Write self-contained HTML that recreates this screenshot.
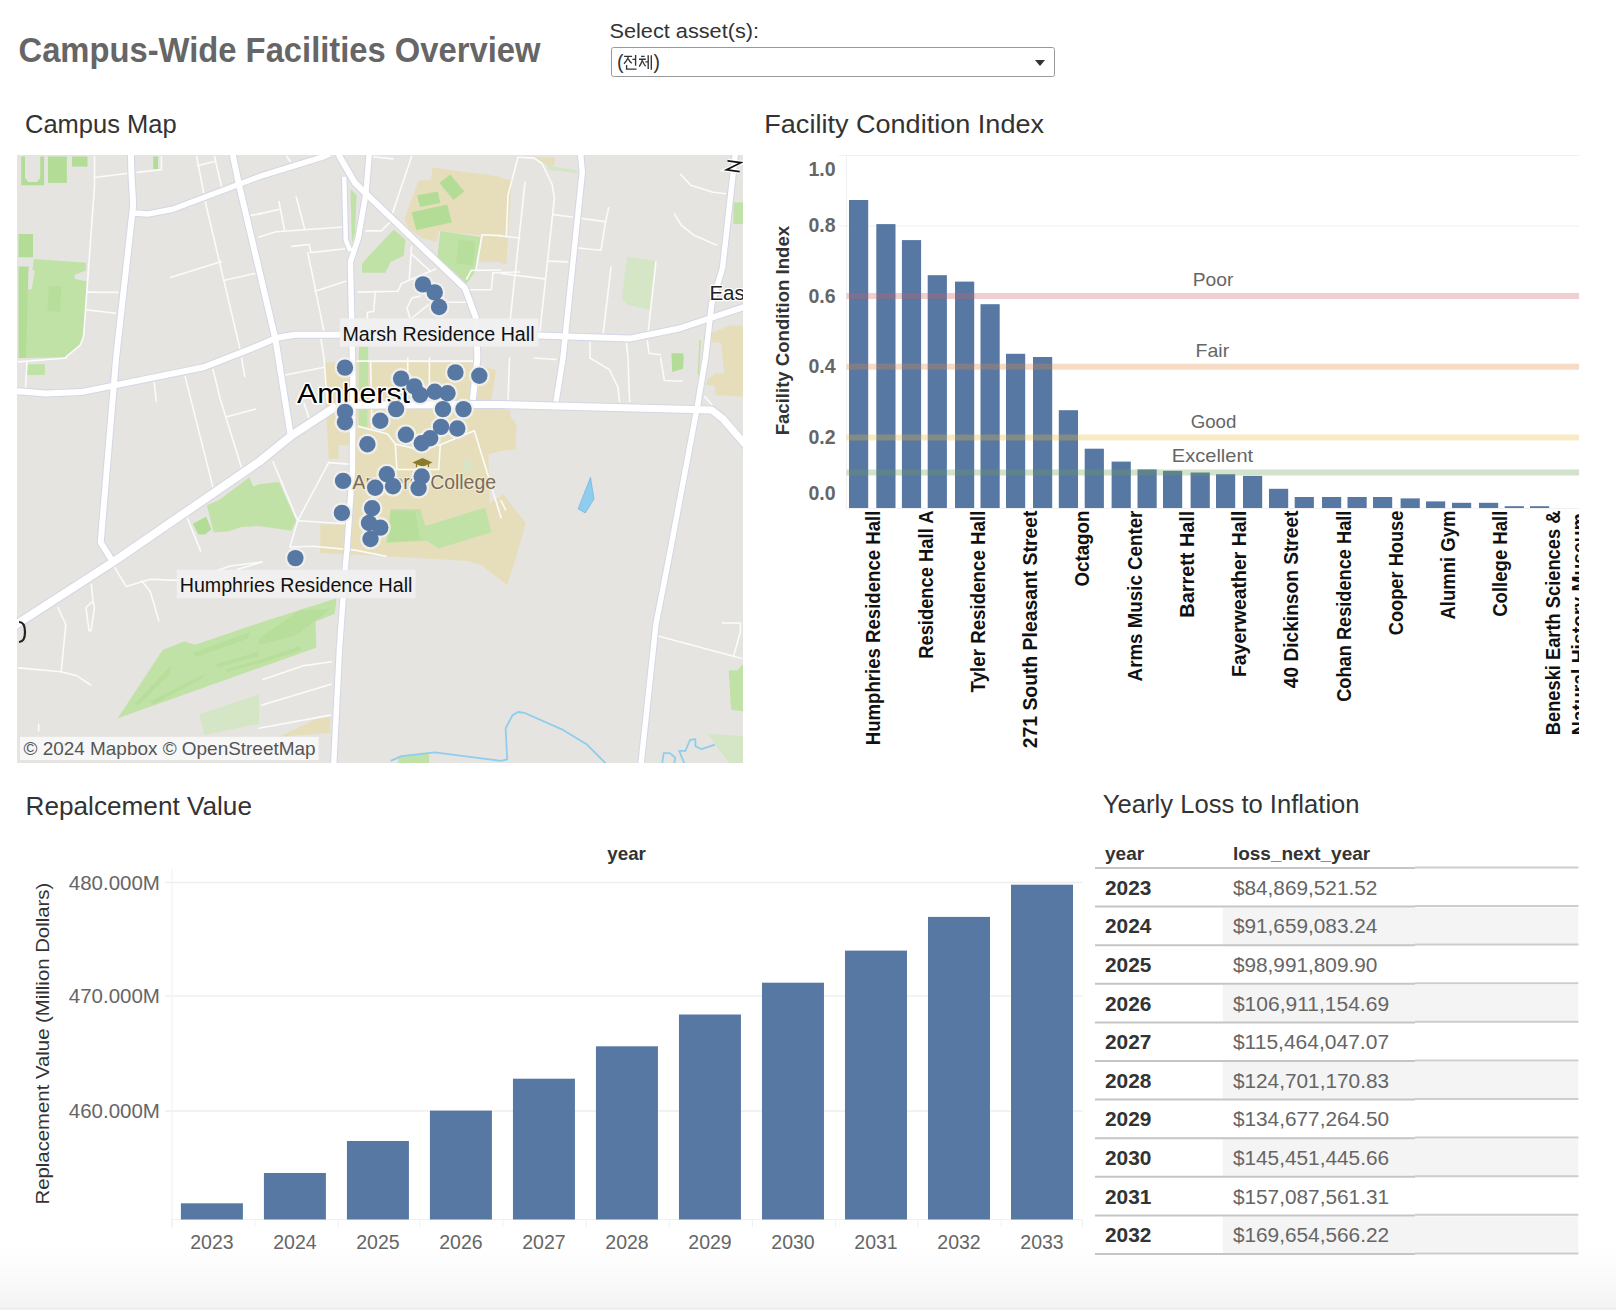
<!DOCTYPE html><html><head><meta charset="utf-8"><title>Campus-Wide Facilities Overview</title>
<style>html,body{margin:0;padding:0;background:#fff;width:1616px;height:1310px;overflow:hidden}
svg{display:block;font-family:"Liberation Sans",sans-serif}</style></head><body>
<svg width="1616" height="1310" viewBox="0 0 1616 1310">
<defs>
<linearGradient id="btm" x1="0" y1="0" x2="0" y2="1"><stop offset="0" stop-color="#fff"/><stop offset="0.35" stop-color="#fcfcfc"/><stop offset="1" stop-color="#f4f4f4"/></linearGradient>
<clipPath id="mapclip"><rect x="17" y="155" width="726" height="608"/></clipPath>
<clipPath id="fciclip"><rect x="760" y="140" width="819" height="640"/></clipPath>
</defs>
<rect x="0" y="1245" width="1616" height="62" fill="url(#btm)"/><rect x="0" y="1307" width="1616" height="3" fill="#efefef"/>

<text x="18.5" y="62" font-size="35" fill="#666" font-weight="bold" text-anchor="stroke="#fff" stroke-width="0.6"" textLength="522" lengthAdjust="spacingAndGlyphs" >Campus-Wide Facilities Overview</text>
<text x="609.5" y="38" font-size="20.5" fill="#333" textLength="149.5" lengthAdjust="spacingAndGlyphs" >Select asset(s):</text>
<rect x="611.5" y="47.5" width="443" height="29" rx="2" fill="#fff" stroke="#999" stroke-width="1"/>
<path d="M1035 60 L1045 60 L1040 66 Z" fill="#333"/>
<text x="617" y="68.6" font-size="19.5" fill="#333">(</text>
<text x="653.6" y="68.6" font-size="19.5" fill="#333">)</text>
<g fill="none" stroke="#333" stroke-width="1.35" stroke-linecap="butt">
<path d="M624.1 56.4 H632.1 M628.3 56.9 Q627 61 624 63.7 M628.3 58.7 Q629.5 61.5 631.8 63.3 M635.6 54.9 V65.8 M632.4 59.4 H635.6 M626.6 65.1 V69.1 H636.6"/>
<path d="M641.1 56.4 H644.6 M639 59.2 H645.8 M642.5 59.7 Q641.3 63.5 639.2 66.6 M642.8 61.4 Q643.8 64.5 645.6 66.3 M648.2 55.2 V69.1 M645.4 61.8 H648.2 M651.3 55.2 V69.8"/>
</g>
<text x="25" y="133.2" font-size="26.5" fill="#333" text-anchor="stroke="#fff" stroke-width="0.45"" textLength="151.6" lengthAdjust="spacingAndGlyphs" >Campus Map</text>
<text x="764.3" y="133" font-size="26.5" fill="#333" text-anchor="stroke="#fff" stroke-width="0.45"" textLength="279.7" lengthAdjust="spacingAndGlyphs" >Facility Condition Index</text>
<text x="25.5" y="814.7" font-size="26.5" fill="#333" text-anchor="stroke="#fff" stroke-width="0.45"" textLength="226.5" lengthAdjust="spacingAndGlyphs" >Repalcement Value</text>
<text x="1102.8" y="813.1" font-size="26.5" fill="#333" text-anchor="stroke="#fff" stroke-width="0.45"" textLength="256.8" lengthAdjust="spacingAndGlyphs" >Yearly Loss to Inflation</text>
<g stroke="#f0f0f0" stroke-width="1">
<line x1="839" y1="155.5" x2="1579" y2="155.5"/>
<line x1="839" y1="226" x2="1579" y2="226"/>
<line x1="846.5" y1="155" x2="846.5" y2="508"/>
<line x1="846.5" y1="508.5" x2="1579" y2="508.5"/>
</g>
<g fill="#5878a4">
<rect x="849.00" y="200" width="19.2" height="308.0"/>
<rect x="876.30" y="224.1" width="19.2" height="283.9"/>
<rect x="901.90" y="240.1" width="19.2" height="267.9"/>
<rect x="927.70" y="275.2" width="19.2" height="232.8"/>
<rect x="955.00" y="281.6" width="19.2" height="226.4"/>
<rect x="980.50" y="304.2" width="19.2" height="203.8"/>
<rect x="1006.00" y="353.8" width="19.2" height="154.2"/>
<rect x="1033.00" y="357" width="19.2" height="151.0"/>
<rect x="1058.80" y="410.2" width="19.2" height="97.8"/>
<rect x="1084.70" y="448.7" width="19.2" height="59.3"/>
<rect x="1111.60" y="461.6" width="19.2" height="46.4"/>
<rect x="1137.50" y="469.4" width="19.2" height="38.6"/>
<rect x="1163.00" y="470.8" width="19.2" height="37.2"/>
<rect x="1190.60" y="472.5" width="19.2" height="35.5"/>
<rect x="1216.00" y="474.2" width="19.2" height="33.8"/>
<rect x="1243.00" y="475.9" width="19.2" height="32.1"/>
<rect x="1269.00" y="488.8" width="19.2" height="19.2"/>
<rect x="1294.70" y="497" width="19.2" height="11.0"/>
<rect x="1322.00" y="497" width="19.2" height="11.0"/>
<rect x="1347.50" y="497" width="19.2" height="11.0"/>
<rect x="1373.00" y="497" width="19.2" height="11.0"/>
<rect x="1400.60" y="498.4" width="19.2" height="9.6"/>
<rect x="1426.00" y="501.4" width="19.2" height="6.6"/>
<rect x="1452.00" y="502.8" width="19.2" height="5.2"/>
<rect x="1479.00" y="502.8" width="19.2" height="5.2"/>
<rect x="1504.70" y="506.2" width="19.2" height="1.8"/>
<rect x="1530.00" y="506.2" width="19.2" height="1.8"/>
</g>
<rect x="846.5" y="293" width="732.5" height="6" fill="rgb(205,95,100)" fill-opacity="0.3"/>
<rect x="846.5" y="363.7" width="732.5" height="6" fill="rgb(225,140,70)" fill-opacity="0.3"/>
<rect x="846.5" y="434.5" width="732.5" height="6" fill="rgb(230,190,60)" fill-opacity="0.3"/>
<rect x="846.5" y="469.5" width="732.5" height="6" fill="rgb(110,160,90)" fill-opacity="0.3"/>
<text x="1192.7" y="286" font-size="19" fill="#666" textLength="40.7" lengthAdjust="spacingAndGlyphs" >Poor</text>
<text x="1195.6" y="357.4" font-size="19" fill="#666" textLength="33.6" lengthAdjust="spacingAndGlyphs" >Fair</text>
<text x="1190.7" y="427.9" font-size="19" fill="#666" textLength="45.7" lengthAdjust="spacingAndGlyphs" >Good</text>
<text x="1171.8" y="462.3" font-size="19" fill="#666" textLength="81.4" lengthAdjust="spacingAndGlyphs" >Excellent</text>
<text x="835.5" y="176" font-size="19.5" fill="#666" font-weight="bold" text-anchor="end" >1.0</text>
<text x="835.5" y="232" font-size="19.5" fill="#666" font-weight="bold" text-anchor="end" >0.8</text>
<text x="835.5" y="302.5" font-size="19.5" fill="#666" font-weight="bold" text-anchor="end" >0.6</text>
<text x="835.5" y="373" font-size="19.5" fill="#666" font-weight="bold" text-anchor="end" >0.4</text>
<text x="835.5" y="443.5" font-size="19.5" fill="#666" font-weight="bold" text-anchor="end" >0.2</text>
<text x="835.5" y="499.5" font-size="19.5" fill="#666" font-weight="bold" text-anchor="end" >0.0</text>
<text transform="translate(788.5,435.3) rotate(-90)" font-size="17.5" font-weight="bold" fill="#333" textLength="209.4" lengthAdjust="spacingAndGlyphs">Facility Condition Index</text>
<g clip-path="url(#fciclip)">
<text transform="translate(880.4,745.3) rotate(-90)" font-size="19.5" font-weight="bold" fill="#111" textLength="234.7" lengthAdjust="spacingAndGlyphs">Humphries Residence Hall</text>
<text transform="translate(932.6,658.8) rotate(-90)" font-size="19.5" font-weight="bold" fill="#111" textLength="148.2" lengthAdjust="spacingAndGlyphs">Residence Hall A</text>
<text transform="translate(984.9,692.4) rotate(-90)" font-size="19.5" font-weight="bold" fill="#111" textLength="181.8" lengthAdjust="spacingAndGlyphs">Tyler Residence Hall</text>
<text transform="translate(1037.1,748.2) rotate(-90)" font-size="19.5" font-weight="bold" fill="#111" textLength="237.6" lengthAdjust="spacingAndGlyphs">271 South Pleasant Street</text>
<text transform="translate(1089.4,586.6) rotate(-90)" font-size="19.5" font-weight="bold" fill="#111" textLength="76.0" lengthAdjust="spacingAndGlyphs">Octagon</text>
<text transform="translate(1141.6,681.4) rotate(-90)" font-size="19.5" font-weight="bold" fill="#111" textLength="170.8" lengthAdjust="spacingAndGlyphs">Arms Music Center</text>
<text transform="translate(1193.8,617.7) rotate(-90)" font-size="19.5" font-weight="bold" fill="#111" textLength="107.1" lengthAdjust="spacingAndGlyphs">Barrett Hall</text>
<text transform="translate(1246.1,677.1) rotate(-90)" font-size="19.5" font-weight="bold" fill="#111" textLength="166.5" lengthAdjust="spacingAndGlyphs">Fayerweather Hall</text>
<text transform="translate(1298.3,688.2) rotate(-90)" font-size="19.5" font-weight="bold" fill="#111" textLength="177.6" lengthAdjust="spacingAndGlyphs">40 Dickinson Street</text>
<text transform="translate(1350.6,701.8) rotate(-90)" font-size="19.5" font-weight="bold" fill="#111" textLength="191.2" lengthAdjust="spacingAndGlyphs">Cohan Residence Hall</text>
<text transform="translate(1402.8,635.3) rotate(-90)" font-size="19.5" font-weight="bold" fill="#111" textLength="124.7" lengthAdjust="spacingAndGlyphs">Cooper House</text>
<text transform="translate(1455.0,619.5) rotate(-90)" font-size="19.5" font-weight="bold" fill="#111" textLength="108.9" lengthAdjust="spacingAndGlyphs">Alumni Gym</text>
<text transform="translate(1507.3,616.8) rotate(-90)" font-size="19.5" font-weight="bold" fill="#111" textLength="106.2" lengthAdjust="spacingAndGlyphs">College Hall</text>
<text transform="translate(1559.5,735.2) rotate(-90)" font-size="19.5" font-weight="bold" fill="#111" textLength="224.6" lengthAdjust="spacingAndGlyphs">Beneski Earth Sciences &amp;</text>
<text transform="translate(1586.0,735.2) rotate(-90)" font-size="19.5" font-weight="bold" fill="#111" textLength="222" lengthAdjust="spacingAndGlyphs">Natural History Museum</text>
</g>
<g stroke="#eeeeee" stroke-width="1.3">
<line x1="165" y1="882.5" x2="1082.5" y2="882.5"/>
<line x1="165" y1="995.8" x2="1082.5" y2="995.8"/>
<line x1="165" y1="1111" x2="1082.5" y2="1111"/>
</g>
<g stroke="#f0f0f0" stroke-width="1">
<line x1="172" y1="869" x2="172" y2="1228"/>
<line x1="172" y1="1219.5" x2="1082.5" y2="1219.5"/>
<line x1="172" y1="1219.5" x2="172" y2="1227"/>
<line x1="255" y1="1219.5" x2="255" y2="1227"/>
<line x1="338" y1="1219.5" x2="338" y2="1227"/>
<line x1="419.7" y1="1219.5" x2="419.7" y2="1227"/>
<line x1="503" y1="1219.5" x2="503" y2="1227"/>
<line x1="586" y1="1219.5" x2="586" y2="1227"/>
<line x1="669.4" y1="1219.5" x2="669.4" y2="1227"/>
<line x1="752.5" y1="1219.5" x2="752.5" y2="1227"/>
<line x1="835.5" y1="1219.5" x2="835.5" y2="1227"/>
<line x1="917.9" y1="1219.5" x2="917.9" y2="1227"/>
<line x1="1001" y1="1219.5" x2="1001" y2="1227"/>
<line x1="1082.5" y1="1219.5" x2="1082.5" y2="1227"/>
</g>
<g fill="#5878a4">
<rect x="180.90" y="1203.3" width="62" height="16.2"/>
<rect x="263.91" y="1173" width="62" height="46.5"/>
<rect x="346.92" y="1141" width="62" height="78.5"/>
<rect x="429.93" y="1110.6" width="62" height="108.9"/>
<rect x="512.94" y="1078.7" width="62" height="140.8"/>
<rect x="595.95" y="1046.3" width="62" height="173.2"/>
<rect x="678.96" y="1014.5" width="62" height="205.0"/>
<rect x="761.97" y="982.7" width="62" height="236.8"/>
<rect x="844.98" y="950.6" width="62" height="268.9"/>
<rect x="927.99" y="916.9" width="62" height="302.6"/>
<rect x="1011.00" y="884.7" width="62" height="334.8"/>
</g>
<text x="211.9" y="1248.6" font-size="19.5" fill="#666" text-anchor="middle" >2023</text>
<text x="294.9" y="1248.6" font-size="19.5" fill="#666" text-anchor="middle" >2024</text>
<text x="377.9" y="1248.6" font-size="19.5" fill="#666" text-anchor="middle" >2025</text>
<text x="460.9" y="1248.6" font-size="19.5" fill="#666" text-anchor="middle" >2026</text>
<text x="543.9" y="1248.6" font-size="19.5" fill="#666" text-anchor="middle" >2027</text>
<text x="627.0" y="1248.6" font-size="19.5" fill="#666" text-anchor="middle" >2028</text>
<text x="710.0" y="1248.6" font-size="19.5" fill="#666" text-anchor="middle" >2029</text>
<text x="793.0" y="1248.6" font-size="19.5" fill="#666" text-anchor="middle" >2030</text>
<text x="876.0" y="1248.6" font-size="19.5" fill="#666" text-anchor="middle" >2031</text>
<text x="959.0" y="1248.6" font-size="19.5" fill="#666" text-anchor="middle" >2032</text>
<text x="1042.0" y="1248.6" font-size="19.5" fill="#666" text-anchor="middle" >2033</text>
<text x="159.9" y="890" font-size="19.5" fill="#666" text-anchor="end" textLength="91.1" lengthAdjust="spacingAndGlyphs" >480.000M</text>
<text x="159.9" y="1002.6" font-size="19.5" fill="#666" text-anchor="end" textLength="91.1" lengthAdjust="spacingAndGlyphs" >470.000M</text>
<text x="159.9" y="1118" font-size="19.5" fill="#666" text-anchor="end" textLength="91.1" lengthAdjust="spacingAndGlyphs" >460.000M</text>
<text transform="translate(48.8,1204.5) rotate(-90)" font-size="19" fill="#333" textLength="321.7" lengthAdjust="spacingAndGlyphs">Replacement Value (Million Dollars)</text>
<text x="626.6" y="860" font-size="19" fill="#333" font-weight="bold" text-anchor="middle" textLength="38.6" lengthAdjust="spacingAndGlyphs" >year</text>
<rect x="1222.8" y="907.6" width="355.6" height="37.6" fill="#f4f4f4"/>
<rect x="1222.8" y="984.8" width="355.6" height="37.6" fill="#f4f4f4"/>
<rect x="1222.8" y="1062.0" width="355.6" height="37.6" fill="#f4f4f4"/>
<rect x="1222.8" y="1139.2" width="355.6" height="37.6" fill="#f4f4f4"/>
<rect x="1222.8" y="1216.4" width="355.6" height="37.6" fill="#f4f4f4"/>
<g stroke-width="2">
<line x1="1095" y1="868.0" x2="1415" y2="868.0" stroke="#c5c5c5"/><line x1="1415" y1="867.4" x2="1578.4" y2="867.4" stroke="#cdcdcd"/>
<line x1="1095" y1="906.6" x2="1415" y2="906.6" stroke="#c5c5c5"/><line x1="1415" y1="906.0" x2="1578.4" y2="906.0" stroke="#cdcdcd"/>
<line x1="1095" y1="945.2" x2="1415" y2="945.2" stroke="#c5c5c5"/><line x1="1415" y1="944.6" x2="1578.4" y2="944.6" stroke="#cdcdcd"/>
<line x1="1095" y1="983.8" x2="1415" y2="983.8" stroke="#c5c5c5"/><line x1="1415" y1="983.2" x2="1578.4" y2="983.2" stroke="#cdcdcd"/>
<line x1="1095" y1="1022.4" x2="1415" y2="1022.4" stroke="#c5c5c5"/><line x1="1415" y1="1021.8" x2="1578.4" y2="1021.8" stroke="#cdcdcd"/>
<line x1="1095" y1="1061.0" x2="1415" y2="1061.0" stroke="#c5c5c5"/><line x1="1415" y1="1060.4" x2="1578.4" y2="1060.4" stroke="#cdcdcd"/>
<line x1="1095" y1="1099.6" x2="1415" y2="1099.6" stroke="#c5c5c5"/><line x1="1415" y1="1099.0" x2="1578.4" y2="1099.0" stroke="#cdcdcd"/>
<line x1="1095" y1="1138.2" x2="1415" y2="1138.2" stroke="#c5c5c5"/><line x1="1415" y1="1137.6" x2="1578.4" y2="1137.6" stroke="#cdcdcd"/>
<line x1="1095" y1="1176.8" x2="1415" y2="1176.8" stroke="#c5c5c5"/><line x1="1415" y1="1176.2" x2="1578.4" y2="1176.2" stroke="#cdcdcd"/>
<line x1="1095" y1="1215.4" x2="1415" y2="1215.4" stroke="#c5c5c5"/><line x1="1415" y1="1214.8" x2="1578.4" y2="1214.8" stroke="#cdcdcd"/>
<line x1="1095" y1="1254.0" x2="1415" y2="1254.0" stroke="#c5c5c5"/><line x1="1415" y1="1253.4" x2="1578.4" y2="1253.4" stroke="#cdcdcd"/>
</g>
<text x="1105" y="860" font-size="19" fill="#333" font-weight="bold" >year</text>
<text x="1232.9" y="860" font-size="19" fill="#333" font-weight="bold" >loss_next_year</text>
<text x="1105" y="894.7" font-size="19.5" fill="#333" font-weight="bold" textLength="46.5" lengthAdjust="spacingAndGlyphs" >2023</text>
<text x="1232.9" y="894.7" font-size="19.5" fill="#666" textLength="144.5" lengthAdjust="spacingAndGlyphs" >$84,869,521.52</text>
<text x="1105" y="933.3" font-size="19.5" fill="#333" font-weight="bold" textLength="46.5" lengthAdjust="spacingAndGlyphs" >2024</text>
<text x="1232.9" y="933.3" font-size="19.5" fill="#666" textLength="144.5" lengthAdjust="spacingAndGlyphs" >$91,659,083.24</text>
<text x="1105" y="971.9" font-size="19.5" fill="#333" font-weight="bold" textLength="46.5" lengthAdjust="spacingAndGlyphs" >2025</text>
<text x="1232.9" y="971.9" font-size="19.5" fill="#666" textLength="144.5" lengthAdjust="spacingAndGlyphs" >$98,991,809.90</text>
<text x="1105" y="1010.5" font-size="19.5" fill="#333" font-weight="bold" textLength="46.5" lengthAdjust="spacingAndGlyphs" >2026</text>
<text x="1232.9" y="1010.5" font-size="19.5" fill="#666" textLength="156.2" lengthAdjust="spacingAndGlyphs" >$106,911,154.69</text>
<text x="1105" y="1049.1" font-size="19.5" fill="#333" font-weight="bold" textLength="46.5" lengthAdjust="spacingAndGlyphs" >2027</text>
<text x="1232.9" y="1049.1" font-size="19.5" fill="#666" textLength="156.2" lengthAdjust="spacingAndGlyphs" >$115,464,047.07</text>
<text x="1105" y="1087.7" font-size="19.5" fill="#333" font-weight="bold" textLength="46.5" lengthAdjust="spacingAndGlyphs" >2028</text>
<text x="1232.9" y="1087.7" font-size="19.5" fill="#666" textLength="156.2" lengthAdjust="spacingAndGlyphs" >$124,701,170.83</text>
<text x="1105" y="1126.3" font-size="19.5" fill="#333" font-weight="bold" textLength="46.5" lengthAdjust="spacingAndGlyphs" >2029</text>
<text x="1232.9" y="1126.3" font-size="19.5" fill="#666" textLength="156.2" lengthAdjust="spacingAndGlyphs" >$134,677,264.50</text>
<text x="1105" y="1164.9" font-size="19.5" fill="#333" font-weight="bold" textLength="46.5" lengthAdjust="spacingAndGlyphs" >2030</text>
<text x="1232.9" y="1164.9" font-size="19.5" fill="#666" textLength="156.2" lengthAdjust="spacingAndGlyphs" >$145,451,445.66</text>
<text x="1105" y="1203.5" font-size="19.5" fill="#333" font-weight="bold" textLength="46.5" lengthAdjust="spacingAndGlyphs" >2031</text>
<text x="1232.9" y="1203.5" font-size="19.5" fill="#666" textLength="156.2" lengthAdjust="spacingAndGlyphs" >$157,087,561.31</text>
<text x="1105" y="1242.1" font-size="19.5" fill="#333" font-weight="bold" textLength="46.5" lengthAdjust="spacingAndGlyphs" >2032</text>
<text x="1232.9" y="1242.1" font-size="19.5" fill="#666" textLength="156.2" lengthAdjust="spacingAndGlyphs" >$169,654,566.22</text>
<g clip-path="url(#mapclip)">
<rect x="17" y="155" width="726" height="608" fill="#e6e4e0"/>
<polygon points="432.5,167.4 501.0,176.7 501.0,262.0 479.0,261.9 482.0,235.6 438.7,230.9 437.2,241.8 423.2,238.7 407.7,227.8 404.6,218.5 418.6,180.6 431.0,179.8" fill="#e6deba"/>
<polygon points="534.3,157.3 554.4,157.3 554.4,165.8 547.5,165.8" fill="#e6deba"/>
<polygon points="501.0,178.2 511.8,179.8 506.4,263.4 501.0,263.4" fill="#e6deba"/>
<polygon points="324.4,362.6 472.8,362.6 496.0,370.4 491.4,399.8 474.3,405.0 501.0,409.1 510.3,410.7 510.3,416.1 516.5,424.6 515.7,449.4 501.0,451.0 488.3,454.0 489.8,503.6 503.3,494.3 525.8,523.0 515.0,561.0 507.2,585.0 482.1,565.6 468.1,561.0 386.0,556.3 320.2,553.0 320.2,524.4 349.0,524.4 352.0,470.0 348.9,445.3 338.5,445.3 338.5,459.0 328.7,459.0 325.6,406.0" fill="#e6deba"/>
<polygon points="711.7,333.2 729.5,325.4 743.0,325.4 743.0,358.0 743.0,396.7 715.6,395.2 714.8,385.9 706.3,385.1 707.0,379.7 715.6,373.5 724.1,372.7 721.0,342.5 711.7,342.5" fill="#e6deba"/>
<polygon points="316.3,719.0 330.3,716.7 330.3,733.0 279.1,736.8" fill="#e6deba"/>
<polygon points="21.2,156.5 25.0,156.5 25.0,178.0 28.0,182.0 37.0,182.0 40.2,178.0 40.2,156.5 44.1,156.5 44.1,185.2 21.2,185.2" fill="#b3dc97"/>
<polygon points="48.0,156.5 66.9,156.5 66.9,182.9 48.0,182.9" fill="#b3dc97"/>
<polygon points="72.0,156.5 87.5,156.5 87.5,166.6 72.0,166.6" fill="#b3dc97"/>
<polygon points="153.3,156.5 158.0,156.5 158.0,169.0 153.3,169.0" fill="#b3dc97"/>
<polygon points="18.5,234.0 33.0,234.0 33.0,257.2 18.5,257.2" fill="#b3dc97"/>
<polygon points="34.0,259.1 86.0,262.7 86.0,270.4 74.3,275.1 75.1,279.0 86.7,281.3 83.6,336.3 80.5,344.8 65.8,357.2 24.7,358.0 27.8,289.8 31.7,289.0 34.8,270.4 32.5,269.6" fill="#c1e2a6"/>
<polygon points="18.5,266.5 28.6,266.5 26.0,358.0 18.5,358.0" fill="#b3dc97"/>
<polygon points="27.0,364.2 44.9,364.2 44.9,375.0 27.0,375.0" fill="#c1e2a6"/>
<polygon points="350.4,189.0 356.6,195.3 355.0,232.5 352.0,243.3" fill="#c1e2a6"/>
<polygon points="393.8,229.4 405.4,239.4 403.8,255.7 390.7,261.9 385.3,272.7 362.0,272.7 362.0,263.4" fill="#c1e2a6"/>
<polygon points="439.5,182.9 450.3,174.4 464.3,191.4 453.4,199.9" fill="#b3dc97"/>
<polygon points="417.0,195.3 437.9,191.4 440.2,203.0 420.1,206.9" fill="#b3dc97"/>
<polygon points="411.6,212.3 447.2,204.6 451.9,222.4 416.2,230.1" fill="#b3dc97"/>
<polygon points="440.3,230.9 480.5,237.1 476.7,269.6 466.6,283.6 455.0,272.7 437.2,258.8" fill="#c1e2a6"/>
<polygon points="547.5,165.8 577.7,170.5 577.7,173.5 547.5,169.5" fill="#d4e6c6"/>
<polygon points="627.3,256.5 655.9,261.1 649.7,309.9 626.5,304.5 621.8,297.5" fill="#d4e6c6"/>
<polygon points="733.4,202.3 743.0,202.3 743.0,224.0 733.4,224.0" fill="#c1e2a6"/>
<polygon points="671.4,353.3 683.0,353.3 683.8,358.0 683.0,368.8 672.2,372.0" fill="#b3dc97"/>
<polygon points="358.9,346.0 368.2,346.0 368.2,358.0 367.4,427.7 358.9,426.2" fill="#c1e2a6"/>
<polygon points="390.7,509.0 420.1,509.0 425.5,526.1 485.2,507.5 491.4,532.3 438.7,548.6 426.3,540.8 386.0,543.1" fill="#c1e2a6"/>
<polygon points="206.8,505.2 218.4,500.5 249.4,477.3 253.3,486.6 259.0,484.3 279.1,482.0 296.2,520.7 291.5,530.7 259.0,526.1 241.6,526.9 227.7,531.5 213.7,532.3" fill="#c1e2a6"/>
<polygon points="192.8,523.8 206.0,516.8 211.4,529.2 205.2,534.6 198.3,534.6" fill="#b3dc97"/>
<polygon points="462.0,460.0 468.0,458.7 472.8,470.0 466.0,472.6" fill="#d4e6c6"/>
<polygon points="117.7,718.2 162.6,650.1 184.3,641.6 195.2,644.7 259.0,623.0 336.5,598.2 334.9,613.7 315.5,621.4 316.3,647.8 259.0,667.9" fill="#c1e2a6"/>
<polygon points="199.0,714.4 259.0,694.2 259.0,723.7 204.5,735.3" fill="#d4e6c6"/>
<polygon points="728.7,670.2 738.0,670.2 741.9,664.8 743.0,664.8 743.0,711.3 731.1,709.7" fill="#c1e2a6"/>
<polygon points="707.8,733.7 743.0,736.1 743.0,763.0 728.7,763.0" fill="#d4e6c6"/>
<polygon points="398.4,756.2 429.0,753.0 429.0,763.0 398.4,763.0" fill="#c1e2a6"/>
<polygon points="699.3,340.0 701.0,340.0 699.0,375.0 697.5,375.0" fill="#c1e2a6"/>
<polygon points="134.7,703.5 171.9,664.8 168.8,675.6 137.8,705.8" fill="#b3dc97" opacity="0.75"/>
<polygon points="150.2,701.2 205.2,674.1 201.4,678.7 153.3,704.3" fill="#b3dc97" opacity="0.75"/>
<polygon points="192.8,653.2 249.4,632.3 247.8,638.5 196.0,657.0" fill="#b3dc97" opacity="0.75"/>
<polygon points="216.0,664.0 259.0,651.6 259.0,656.0 218.0,667.5" fill="#b3dc97" opacity="0.75"/>
<polygon points="225.4,669.4 259.0,660.0 259.0,663.0 227.0,672.0" fill="#b3dc97" opacity="0.75"/>
<polygon points="259.0,638.5 299.3,610.6 330.3,609.0 296.2,635.4 259.0,645.0" fill="#b3dc97" opacity="0.75"/>
<polygon points="259.0,660.1 300.0,646.2 300.8,650.1 259.0,664.0" fill="#b3dc97" opacity="0.75"/>
<polygon points="48.8,285.9 61.2,285.9 60.5,312.2 47.5,311.0" fill="#b3dc97" opacity="0.75"/>
<polygon points="458.8,239.4 475.1,242.0 473.0,265.8 456.0,263.0" fill="#b3dc97" opacity="0.75"/>
<polygon points="390.7,511.0 415.0,511.0 420.0,540.0 388.0,542.0" fill="#b3dc97" opacity="0.75"/>
<g fill="none" stroke="#fbfbfb" stroke-width="1.6" stroke-linejoin="round" stroke-linecap="round">
<polyline points="94.5,156.5 94.5,186.0 83.6,336.3 80.5,344.8 65.8,357.2"/>
<polyline points="94.5,177.5 128.2,173.3"/>
<polyline points="137.0,172.4 161.4,169.7 161.4,156.5"/>
<polyline points="87.5,292.1 117.7,292.4"/>
<polyline points="86.7,309.9 115.8,313.3"/>
<polyline points="196.7,156.5 203.7,193.0"/>
<polyline points="197.5,165.8 214.5,161.5"/>
<polyline points="214.5,156.5 221.5,186.8"/>
<polyline points="205.2,201.5 240.1,349.4"/>
<polyline points="170.4,277.4 221.5,261.6"/>
<polyline points="224.6,280.2 254.8,273.5"/>
<polyline points="250.9,215.4 262.0,213.5"/>
<polyline points="259.0,213.9 279.9,209.2"/>
<polyline points="279.0,201.5 284.6,230.9"/>
<polyline points="296.2,196.8 304.7,229.4"/>
<polyline points="259.0,237.1 276.0,231.7 343.4,227.0"/>
<polyline points="291.5,246.4 309.3,244.5 310.9,252.6 345.0,248.7"/>
<polyline points="307.8,252.6 324.0,331.6"/>
<polyline points="314.8,291.3 345.8,281.3"/>
<polyline points="321.0,339.4 324.0,358.0 327.2,403.0"/>
<polyline points="365.9,230.9 381.4,230.9 392.2,220.0"/>
<polyline points="392.2,213.9 411.6,156.5"/>
<polyline points="286.9,156.5 290.0,161.2"/>
<polyline points="370.5,156.5 393.0,158.9"/>
<polyline points="358.1,292.1 397.7,291.3 401.5,283.6 435.6,268.9"/>
<polyline points="411.6,246.4 409.3,278.9"/>
<polyline points="411.6,254.1 429.4,270.4"/>
<polyline points="375.2,292.9 373.6,311.5 367.4,312.2 367.4,318.0"/>
<polyline points="448.0,302.2 466.6,302.2"/>
<polyline points="469.7,289.8 491.4,289.8 492.9,272.7 520.0,272.0"/>
<polyline points="466.6,279.0 471.2,270.4 501.0,270.0"/>
<polyline points="475.9,269.6 482.1,234.8 501.0,235.6"/>
<polyline points="410.0,318.0 407.0,308.0 412.0,298.0 420.0,296.0"/>
<polyline points="412.0,318.0 428.0,305.0"/>
<polyline points="518.0,157.3 534.3,158.1 542.0,163.5 552.1,184.4 554.4,198.4 539.7,333.2"/>
<polyline points="518.0,157.3 508.0,195.3 506.4,235.6"/>
<polyline points="501.0,236.0 520.0,238.0"/>
<polyline points="525.0,182.1 510.3,319.2"/>
<polyline points="552.9,214.6 572.3,217.0"/>
<polyline points="581.6,218.5 605.6,221.6 608.7,207.7"/>
<polyline points="605.6,221.6 600.9,250.3 578.5,248.0"/>
<polyline points="548.3,261.1 567.6,261.9"/>
<polyline points="501.0,273.5 545.2,278.9"/>
<polyline points="611.0,267.3 603.2,333.2"/>
<polyline points="655.9,261.9 648.2,331.6"/>
<polyline points="680.7,174.4 690.8,185.2 713.2,192.2 725.6,193.7"/>
<polyline points="674.5,213.9 681.5,225.5 694.6,235.6 716.3,244.9"/>
<polyline points="590.0,342.5 590.0,358.0"/>
<polyline points="626.5,343.2 628.0,358.0 629.6,401.4"/>
<polyline points="647.4,340.9 649.0,353.3 660.6,354.8"/>
<polyline points="509.5,358.0 508.0,399.1"/>
<polyline points="534.3,358.0 556.0,359.5"/>
<polyline points="590.0,358.0 609.4,369.6 618.0,387.4 619.5,401.4"/>
<polyline points="660.6,358.0 664.4,380.5 682.3,381.2"/>
<polyline points="704.7,396.7 711.7,404.5"/>
<polyline points="501.0,500.5 505.6,509.8"/>
<polyline points="27.0,362.6 25.5,387.4"/>
<polyline points="18.5,361.9 66.6,358.0"/>
<polyline points="154.1,382.0 156.4,401.4"/>
<polyline points="185.1,376.6 213.0,487.4"/>
<polyline points="213.0,369.6 220.0,398.3 241.6,468.0"/>
<polyline points="226.1,416.9 255.6,409.1"/>
<polyline points="241.6,358.0 244.7,376.6"/>
<polyline points="187.4,518.3 200.6,550.9"/>
<polyline points="285.3,375.0 324.0,367.3"/>
<polyline points="304.0,403.0 310.0,421.5"/>
<polyline points="356.6,361.1 472.8,361.1"/>
<polyline points="370.5,361.1 372.0,427.7"/>
<polyline points="407.7,358.0 407.7,378.1"/>
<polyline points="429.4,358.0 429.4,387.0"/>
<polyline points="358.1,426.2 387.6,433.9 395.3,444.0 415.5,448.6 440.3,444.8 474.3,430.8"/>
<polyline points="395.3,444.0 396.9,469.5 438.7,469.5 440.3,444.8"/>
<polyline points="328.7,462.6 348.9,464.1"/>
<polyline points="328.7,462.6 297.7,520.7 290.0,547.0"/>
<polyline points="273.0,461.8 297.7,520.7"/>
<polyline points="297.7,520.7 345.8,523.8"/>
<polyline points="290.0,547.0 313.2,546.2 355.0,550.1 386.0,556.3"/>
<polyline points="474.3,430.8 501.0,517.6"/>
<polyline points="386.0,400.0 396.0,412.0"/>
<polyline points="114.6,567.2 126.2,586.6 150.2,579.3 176.6,580.4"/>
<polyline points="237.0,569.5 262.0,562.0"/>
<polyline points="141.7,581.1 150.2,591.2 158.8,620.6"/>
<polyline points="91.4,584.2 92.9,601.3 85.9,607.5 89.0,630.7 91.0,630.7 94.5,607.5 92.9,601.3"/>
<polyline points="58.0,607.5 65.8,624.5 61.2,671.8"/>
<polyline points="18.5,667.9 61.2,671.8 76.6,675.6 90.6,685.0"/>
<polyline points="38.7,724.4 38.7,731.0"/>
<polyline points="259.0,728.3 330.3,715.1"/>
<polyline points="262.1,705.1 331.0,684.2"/>
<polyline points="262.9,679.5 303.9,665.6 331.8,661.7"/>
<polyline points="176.0,580.0 205.0,575.0 230.0,566.0 262.0,562.0"/>
<polyline points="658.2,636.1 741.9,658.6"/>
<polyline points="733.4,656.3 740.4,632.3 740.4,623.0 722.5,623.0"/>
</g>
<g fill="none" stroke="#d3d6e6" stroke-linejoin="round">
<polyline points="130.9,150.0 131.3,172.0 133.2,204.6 132.4,212.3 116.1,358.0 100.7,542.4 113.0,562.0" stroke-width="8"/>
<polyline points="132.4,213.1 148.7,213.9 172.7,209.2 259.0,176.7 324.0,156.5 330.0,154.0" stroke-width="7.5"/>
<polyline points="232.0,150.0 233.2,156.9 238.9,184.3 275.6,340.0 290.4,434.0 291.5,435.5" stroke-width="8"/>
<polyline points="10.0,392.0 18.5,391.3 45.7,393.6 81.3,392.1 203.7,367.3 259.0,345.5 276.0,338.0 294.6,334.7 341.0,334.7 538.2,335.5 629.6,338.6 679.2,328.5 750.0,305.0" stroke-width="8"/>
<polyline points="338.0,150.0 339.6,156.5 355.0,182.9 365.9,193.7 465.0,288.2 475.9,317.7 477.4,358.0 472.8,399.8" stroke-width="8"/>
<polyline points="370.0,150.0 369.0,156.5 365.9,193.7 358.1,238.7 350.4,261.9 352.9,380.0 352.4,470.0 347.0,550.0 345.8,561.0 339.6,646.2 333.4,770.0" stroke-width="7.5"/>
<polyline points="344.2,176.7 345.8,240.2 350.4,251.0" stroke-width="6.5"/>
<polyline points="581.0,150.0 580.8,156.5 582.3,172.0 563.0,358.0 556.0,401.4" stroke-width="7.5"/>
<polyline points="736.0,150.0 735.0,156.5 722.5,268.1 711.7,303.7 705.5,358.0 697.7,404.5 668.3,561.0 655.9,624.5 640.4,770.0" stroke-width="7.5"/>
<polyline points="336.5,405.2 472.8,404.5 501.0,404.5 711.7,409.9 722.5,418.4 750.0,450.0" stroke-width="9"/>
<polyline points="10.0,629.0 17.0,624.0 114.6,561.0 259.0,461.8 291.5,435.5 336.5,406.0" stroke-width="10"/>
</g><g fill="none" stroke="#ffffff" stroke-linejoin="round">
<polyline points="130.9,150.0 131.3,172.0 133.2,204.6 132.4,212.3 116.1,358.0 100.7,542.4 113.0,562.0" stroke-width="6"/>
<polyline points="132.4,213.1 148.7,213.9 172.7,209.2 259.0,176.7 324.0,156.5 330.0,154.0" stroke-width="5.5"/>
<polyline points="232.0,150.0 233.2,156.9 238.9,184.3 275.6,340.0 290.4,434.0 291.5,435.5" stroke-width="6"/>
<polyline points="10.0,392.0 18.5,391.3 45.7,393.6 81.3,392.1 203.7,367.3 259.0,345.5 276.0,338.0 294.6,334.7 341.0,334.7 538.2,335.5 629.6,338.6 679.2,328.5 750.0,305.0" stroke-width="6"/>
<polyline points="338.0,150.0 339.6,156.5 355.0,182.9 365.9,193.7 465.0,288.2 475.9,317.7 477.4,358.0 472.8,399.8" stroke-width="6"/>
<polyline points="370.0,150.0 369.0,156.5 365.9,193.7 358.1,238.7 350.4,261.9 352.9,380.0 352.4,470.0 347.0,550.0 345.8,561.0 339.6,646.2 333.4,770.0" stroke-width="5.5"/>
<polyline points="344.2,176.7 345.8,240.2 350.4,251.0" stroke-width="4.5"/>
<polyline points="581.0,150.0 580.8,156.5 582.3,172.0 563.0,358.0 556.0,401.4" stroke-width="5.5"/>
<polyline points="736.0,150.0 735.0,156.5 722.5,268.1 711.7,303.7 705.5,358.0 697.7,404.5 668.3,561.0 655.9,624.5 640.4,770.0" stroke-width="5.5"/>
<polyline points="336.5,405.2 472.8,404.5 501.0,404.5 711.7,409.9 722.5,418.4 750.0,450.0" stroke-width="7"/>
<polyline points="10.0,629.0 17.0,624.0 114.6,561.0 259.0,461.8 291.5,435.5 336.5,406.0" stroke-width="8"/>
</g>
<polygon points="590.5,477.3 594,499 585.4,512.9 578.1,509" fill="#8ecdee" stroke="#6fa8dc" stroke-width="0.6"/>
<g fill="none" stroke="#8ecdee" stroke-width="1.8" stroke-linejoin="round">
<polyline points="390.7,760.8 401.5,756.2 434.8,752.3 501.0,760.8 507.2,759.3 505.6,728.3 512.6,715.1 518.0,712.0 524.2,712.8 563.0,729.9 587.0,744.6 603.2,760.8 606.0,764.0"/>
<polyline points="662.1,764.0 663.7,753.1 669.9,753.1 675.3,757.7 674.0,764.0"/>
<polyline points="684.6,764.0 679.2,750.8 685.4,750.8 690.0,740.0 695.4,739.2 695.4,746.1 701.6,749.2 714.8,744.6"/>
</g>
<path d="M413.9,462.5 L422.5,458.7 L431,462.5 L422.5,466 Z M416.5,464 L416.5,467.5 M428.5,464 L428.5,467" fill="#8a7a2c" stroke="#8a7a2c" stroke-width="1.2"/>
<text x="297" y="402.9" font-size="28.5" fill="#000" stroke="#fff" stroke-width="3" paint-order="stroke" stroke-linejoin="round" textLength="113" lengthAdjust="spacingAndGlyphs">Amherst</text>
<text x="352.5" y="488.9" font-size="19.5" fill="#7a6a5e" stroke="#efe8cc" stroke-width="2.5" paint-order="stroke" stroke-linejoin="round" textLength="143.5" lengthAdjust="spacingAndGlyphs">Amherst College</text>
<text x="709.4" y="299.9" font-size="20.5" fill="#222" stroke="#fff" stroke-width="2.5" paint-order="stroke" stroke-linejoin="round">East</text>
<path d="M727.5,160.8 L740.8,162.7 L726.6,169.8 L739.7,171.6" fill="none" stroke="#fff" stroke-opacity="0.8" stroke-width="4.5" stroke-linejoin="miter"/>
<path d="M727.5,160.8 L740.8,162.7 L726.6,169.8 L739.7,171.6" fill="none" stroke="#111" stroke-width="1.8" stroke-linejoin="miter"/>
<path d="M19,622 Q25,622 25,632 Q25,642 19,642" fill="none" stroke="#222" stroke-width="2.2"/>
<g fill="#f1f1f1" fill-opacity="0.85">
<circle cx="345" cy="367.6" r="10.5"/>
<circle cx="401.1" cy="378.6" r="10.5"/>
<circle cx="455.4" cy="372.4" r="10.5"/>
<circle cx="479.3" cy="375.8" r="10.5"/>
<circle cx="414.4" cy="386.4" r="10.5"/>
<circle cx="420.1" cy="394.9" r="10.5"/>
<circle cx="434.8" cy="391.8" r="10.5"/>
<circle cx="447.5" cy="393.3" r="10.5"/>
<circle cx="345" cy="411.9" r="10.5"/>
<circle cx="345" cy="422.3" r="10.5"/>
<circle cx="396.1" cy="409.1" r="10.5"/>
<circle cx="380.3" cy="420.7" r="10.5"/>
<circle cx="443" cy="409.1" r="10.5"/>
<circle cx="463.5" cy="409.1" r="10.5"/>
<circle cx="405.9" cy="434.7" r="10.5"/>
<circle cx="441" cy="426.9" r="10.5"/>
<circle cx="457.3" cy="428.5" r="10.5"/>
<circle cx="430.2" cy="438.2" r="10.5"/>
<circle cx="421.7" cy="443.2" r="10.5"/>
<circle cx="367.4" cy="444.3" r="10.5"/>
<circle cx="343.1" cy="480.9" r="10.5"/>
<circle cx="386.8" cy="474.2" r="10.5"/>
<circle cx="393" cy="486.3" r="10.5"/>
<circle cx="375.2" cy="487.8" r="10.5"/>
<circle cx="421.7" cy="476.5" r="10.5"/>
<circle cx="418.6" cy="488.1" r="10.5"/>
<circle cx="372.1" cy="508.3" r="10.5"/>
<circle cx="341.9" cy="512.9" r="10.5"/>
<circle cx="369" cy="523" r="10.5"/>
<circle cx="380.3" cy="527.6" r="10.5"/>
<circle cx="370.5" cy="539" r="10.5"/>
<circle cx="295.4" cy="558.1" r="10.5"/>
<circle cx="423" cy="284.4" r="10.5"/>
<circle cx="434.7" cy="292.4" r="10.5"/>
<circle cx="439.1" cy="307" r="10.5"/>
</g><g fill="#5878a4">
<circle cx="345" cy="367.6" r="8.2"/>
<circle cx="401.1" cy="378.6" r="8.2"/>
<circle cx="455.4" cy="372.4" r="8.2"/>
<circle cx="479.3" cy="375.8" r="8.2"/>
<circle cx="414.4" cy="386.4" r="8.2"/>
<circle cx="420.1" cy="394.9" r="8.2"/>
<circle cx="434.8" cy="391.8" r="8.2"/>
<circle cx="447.5" cy="393.3" r="8.2"/>
<circle cx="345" cy="411.9" r="8.2"/>
<circle cx="345" cy="422.3" r="8.2"/>
<circle cx="396.1" cy="409.1" r="8.2"/>
<circle cx="380.3" cy="420.7" r="8.2"/>
<circle cx="443" cy="409.1" r="8.2"/>
<circle cx="463.5" cy="409.1" r="8.2"/>
<circle cx="405.9" cy="434.7" r="8.2"/>
<circle cx="441" cy="426.9" r="8.2"/>
<circle cx="457.3" cy="428.5" r="8.2"/>
<circle cx="430.2" cy="438.2" r="8.2"/>
<circle cx="421.7" cy="443.2" r="8.2"/>
<circle cx="367.4" cy="444.3" r="8.2"/>
<circle cx="343.1" cy="480.9" r="8.2"/>
<circle cx="386.8" cy="474.2" r="8.2"/>
<circle cx="393" cy="486.3" r="8.2"/>
<circle cx="375.2" cy="487.8" r="8.2"/>
<circle cx="421.7" cy="476.5" r="8.2"/>
<circle cx="418.6" cy="488.1" r="8.2"/>
<circle cx="372.1" cy="508.3" r="8.2"/>
<circle cx="341.9" cy="512.9" r="8.2"/>
<circle cx="369" cy="523" r="8.2"/>
<circle cx="380.3" cy="527.6" r="8.2"/>
<circle cx="370.5" cy="539" r="8.2"/>
<circle cx="295.4" cy="558.1" r="8.2"/>
<circle cx="423" cy="284.4" r="8.2"/>
<circle cx="434.7" cy="292.4" r="8.2"/>
<circle cx="439.1" cy="307" r="8.2"/>
</g>
<rect x="339.9" y="318.4" width="198.5" height="28.3" fill="#f0f0f0" fill-opacity="0.95"/>
<text x="342.5" y="340.5" font-size="19.5" fill="#111" textLength="192" lengthAdjust="spacingAndGlyphs">Marsh Residence Hall</text>
<rect x="176.7" y="569.7" width="238.8" height="28.5" fill="#f0f0f0" fill-opacity="0.95"/>
<text x="179.7" y="592" font-size="19.5" fill="#111" textLength="232.7" lengthAdjust="spacingAndGlyphs">Humphries Residence Hall</text>
<rect x="20" y="736.8" width="298.6" height="23.3" fill="#f8f8f8" fill-opacity="0.95"/>
<text x="23.5" y="754.8" font-size="18.5" fill="#555" textLength="292" lengthAdjust="spacingAndGlyphs">© 2024 Mapbox  © OpenStreetMap</text>
</g>
</svg></body></html>
